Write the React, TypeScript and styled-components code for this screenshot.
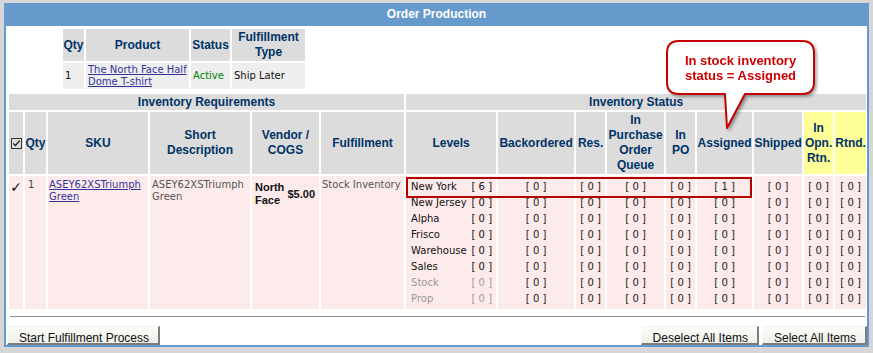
import React from 'react';
import styled, { createGlobalStyle } from 'styled-components';

const GlobalStyle = createGlobalStyle`
  html, body {
    margin: 0;
    padding: 0;
    background: #d6d6d6;
  }
  body {
    min-height: 100vh;
    overflow: hidden;
  }
`;

const HEAD_FONT = `'Liberation Sans', Arial, sans-serif`;
const BODY_FONT = `'DejaVu Sans', Verdana, sans-serif`;

interface Level {
  name: string;
  qty: number;
  muted?: boolean;
}

const levels: Level[] = [
  { name: 'New York', qty: 6 },
  { name: 'New Jersey', qty: 0 },
  { name: 'Alpha', qty: 0 },
  { name: 'Frisco', qty: 0 },
  { name: 'Warehouse', qty: 0 },
  { name: 'Sales', qty: 0 },
  { name: 'Stock', qty: 0, muted: true },
  { name: 'Prop', qty: 0, muted: true },
];

interface StatusColumn {
  key: string;
  label: React.ReactNode;
  width: number;
  yellow?: boolean;
}

const statusColumns: StatusColumn[] = [
  { key: 'backordered', label: 'Backordered', width: 76 },
  { key: 'res', label: 'Res.', width: 29 },
  {
    key: 'queue',
    label: (
      <>
        In
        <br />
        Purchase
        <br />
        Order
        <br />
        Queue
      </>
    ),
    width: 57,
  },
  {
    key: 'po',
    label: (
      <>
        In
        <br />
        PO
      </>
    ),
    width: 29,
  },
  { key: 'assigned', label: 'Assigned', width: 55 },
  { key: 'shipped', label: 'Shipped', width: 48 },
  {
    key: 'opnrtn',
    label: (
      <>
        In
        <br />
        Opn.
        <br />
        Rtn.
      </>
    ),
    width: 29,
    yellow: true,
  },
  { key: 'rtnd', label: 'Rtnd.', width: 31, yellow: true },
];

const valueFor = (col: string, row: number) => (col === 'assigned' && row === 0 ? 1 : 0);

export default function App() {
  return (
    <>
      <GlobalStyle />
      <Panel>
        <PanelHeader>Order Production</PanelHeader>

        <OrderTable>
          <colgroup>
            <col style={{ width: 21 }} />
            <col style={{ width: 103 }} />
            <col style={{ width: 39 }} />
            <col style={{ width: 73 }} />
          </colgroup>
          <thead>
            <tr>
              <OrderHead>Qty</OrderHead>
              <OrderHead>Product</OrderHead>
              <OrderHead>Status</OrderHead>
              <OrderHead>
                Fulfillment
                <br />
                Type
              </OrderHead>
            </tr>
          </thead>
          <tbody>
            <tr>
              <OrderCell>1</OrderCell>
              <OrderCell>
                <Link href="#">The North Face Half Dome T-shirt</Link>
              </OrderCell>
              <OrderCell $color="#008000">Active</OrderCell>
              <OrderCell>Ship Later</OrderCell>
            </tr>
          </tbody>
        </OrderTable>

        <InventoryTable>
          <colgroup>
            <col style={{ width: 14 }} />
            <col style={{ width: 21 }} />
            <col style={{ width: 100 }} />
            <col style={{ width: 100 }} />
            <col style={{ width: 67 }} />
            <col style={{ width: 83 }} />
            <col style={{ width: 90 }} />
            {statusColumns.map((c) => (
              <col key={c.key} style={{ width: c.width }} />
            ))}
          </colgroup>
          <thead>
            <tr>
              <GroupHead colSpan={6}>Inventory Requirements</GroupHead>
              <GroupHead colSpan={9}>Inventory Status</GroupHead>
            </tr>
            <tr>
              <ColHead>
                <CheckboxIcon viewBox="0 0 11 11">
                  <rect x="0.5" y="0.5" width="10" height="10" fill="none" stroke="#333" />
                  <path d="M2.3 5.4 L4.4 7.6 L8.7 2.6" fill="none" stroke="#111" strokeWidth="1.3" />
                </CheckboxIcon>
              </ColHead>
              <ColHead>Qty</ColHead>
              <ColHead>SKU</ColHead>
              <ColHead>
                Short
                <br />
                Description
              </ColHead>
              <ColHead>
                Vendor /
                <br />
                COGS
              </ColHead>
              <ColHead>Fulfillment</ColHead>
              <ColHead>Levels</ColHead>
              {statusColumns.map((c) => (
                <ColHead key={c.key} $yellow={c.yellow}>
                  {c.label}
                </ColHead>
              ))}
            </tr>
          </thead>
          <tbody>
            <tr>
              <DataCell>
                <CheckMark>✓</CheckMark>
              </DataCell>
              <DataCell $color="#444" $padLeft={3}>
                1
              </DataCell>
              <DataCell $padLeft={1}>
                <Link href="#">ASEY62XSTriumph Green</Link>
              </DataCell>
              <DataCell $color="#555">ASEY62XSTriumph Green</DataCell>
              <DataCell>
                <VendorBox>
                  <span>
                    North
                    <br />
                    Face
                  </span>
                  <span>$5.00</span>
                </VendorBox>
              </DataCell>
              <DataCell $color="#555" $padLeft={1}>
                Stock Inventory
              </DataCell>
              <StackCell>
                {levels.map((l) => (
                  <LevelLine key={l.name} $muted={l.muted}>
                    <span>{l.name}</span>
                    <span>[ {l.qty} ]</span>
                  </LevelLine>
                ))}
              </StackCell>
              {statusColumns.map((c) => (
                <StackCell key={c.key}>
                  {levels.map((l, i) => (
                    <ValueLine key={l.name}>[ {valueFor(c.key, i)} ]</ValueLine>
                  ))}
                </StackCell>
              ))}
            </tr>
          </tbody>
        </InventoryTable>

        <Rule />

        <ButtonBar>
          <ClassicButton type="button">Start Fulfillment Process</ClassicButton>
          <ButtonGroup>
            <ClassicButton type="button">Deselect All Items</ClassicButton>
            <ClassicButton type="button">Select All Items</ClassicButton>
          </ButtonGroup>
        </ButtonBar>

        <Highlight />

        <Callout>
          <svg width="156" height="96" viewBox="0 0 156 96">
            <path
              d="M14 2 H137 Q149 2 149 14 V43 Q149 55 137 55 H80 L62 89 L60 55 H14 Q2 55 2 43 V14 Q2 2 14 2 Z"
              fill="#fff"
              stroke="#c40000"
              strokeWidth="2"
              strokeLinejoin="round"
            />
          </svg>
          <CalloutText>
            In stock inventory
            <br />
            status = Assigned
          </CalloutText>
        </Callout>
      </Panel>
    </>
  );
}

const Panel = styled.div`
  position: relative;
  width: 861px;
  margin: 3px 4px 0;
  border: 2px solid #6699cc;
  border-top: 0;
  background: #fff;
`;

const PanelHeader = styled.div`
  height: 23px;
  background: #6699cc;
  color: #fff;
  font: bold 12px ${HEAD_FONT};
  line-height: 23px;
  text-align: center;
`;

const OrderTable = styled.table`
  table-layout: fixed;
  width: 246px;
  margin: 1px 0 0 55px;
  border-collapse: separate;
  border-spacing: 2px;
`;

const OrderHead = styled.th`
  height: 32px;
  padding: 0;
  background: #dcdcdc;
  color: #003366;
  font: bold 12px ${HEAD_FONT};
  line-height: 15px;
  text-align: center;
  vertical-align: middle;
`;

const OrderCell = styled.td<{ $color?: string }>`
  height: 26px;
  padding: 0 1px 0 2px;
  background: #eeeeee;
  color: ${(p) => p.$color || '#111'};
  font: 10px ${BODY_FONT};
  line-height: 12px;
  vertical-align: middle;
`;

const Link = styled.a`
  color: #333399;
  text-decoration: underline;
`;

const InventoryTable = styled.table`
  table-layout: fixed;
  width: 861px;
  margin: 1px 0 0 1px;
  border-collapse: separate;
  border-spacing: 2px;
`;

const GroupHead = styled.th`
  height: 16px;
  padding: 0;
  background: #dcdcdc;
  color: #003366;
  font: bold 12px ${HEAD_FONT};
  line-height: 16px;
  text-align: center;
`;

const ColHead = styled.th<{ $yellow?: boolean }>`
  height: 62px;
  padding: 0;
  background: ${(p) => (p.$yellow ? '#ffff99' : '#dcdcdc')};
  color: #003366;
  font: bold 12px ${HEAD_FONT};
  line-height: 15px;
  text-align: center;
  vertical-align: middle;
  white-space: nowrap;
`;

const CheckboxIcon = styled.svg`
  display: block;
  width: 11px;
  height: 11px;
  margin: 0 auto;
`;

const DataCell = styled.td<{ $color?: string; $padLeft?: number }>`
  padding: 3px 0 0 ${(p) => p.$padLeft ?? 2}px;
  background: #fdebeb;
  color: ${(p) => p.$color || '#111'};
  font: 10px ${BODY_FONT};
  line-height: 12px;
  vertical-align: top;
  word-wrap: break-word;
`;

const CheckMark = styled.span`
  display: block;
  margin-left: -2px;
  padding-top: 1px;
  font: 14px ${BODY_FONT};
  line-height: 14px;
  color: #111;
  text-align: center;
`;

const VendorBox = styled.div`
  display: flex;
  align-items: center;
  justify-content: space-between;
  padding: 2px 4px 0 1px;
  color: #111;
  font: bold 11px ${HEAD_FONT};
  line-height: 13px;
`;

const StackCell = styled.td`
  height: 128px;
  padding: 3px 4px 2px 5px;
  background: #fdebeb;
  vertical-align: top;
`;

const LevelLine = styled.div<{ $muted?: boolean }>`
  display: flex;
  justify-content: space-between;
  height: 16px;
  color: ${(p) => (p.$muted ? '#999' : '#111')};
  font: 10px ${BODY_FONT};
  line-height: 16px;
  white-space: nowrap;
`;

const ValueLine = styled.div`
  height: 16px;
  margin-left: -5px;
  margin-right: -4px;
  color: #222;
  font: 10px ${BODY_FONT};
  line-height: 16px;
  text-align: center;
  white-space: nowrap;
`;

const Rule = styled.div`
  margin: 5px 2px 9px 4px;
  border-top: 1px solid #8c8c8c;
`;

const ButtonBar = styled.div`
  display: flex;
  justify-content: space-between;
  align-items: flex-end;
  padding-left: 1px;
`;

const ButtonGroup = styled.div`
  display: flex;
  gap: 3px;
`;

const ClassicButton = styled.button`
  box-sizing: border-box;
  height: 19px;
  margin: 0;
  padding: 5px 9px 0 11px;
  background: linear-gradient(#fbfbf9, #efefe9);
  border-style: solid;
  border-width: 1px 2px 2px 1px;
  border-color: #f2f2f2 #7c7c7c #7c7c7c #fafafa;
  border-radius: 0;
  color: #111;
  font: 12px ${HEAD_FONT};
  line-height: 12px;
  text-align: left;
  white-space: nowrap;
  cursor: pointer;
`;

const Highlight = styled.div`
  position: absolute;
  left: 400px;
  top: 174px;
  width: 346px;
  height: 21px;
  box-sizing: border-box;
  border: 2px solid #b40000;
  pointer-events: none;
`;

const Callout = styled.div`
  position: absolute;
  left: 659px;
  top: 36px;
  width: 156px;
  height: 96px;
  filter: drop-shadow(2px 2px 1.5px rgba(0, 0, 0, 0.35));

  svg {
    display: block;
  }
`;

const CalloutText = styled.div`
  position: absolute;
  left: 2px;
  top: 14px;
  width: 147px;
  color: #cc0000;
  font: bold 13px ${HEAD_FONT};
  line-height: 15px;
  text-align: center;
`;
